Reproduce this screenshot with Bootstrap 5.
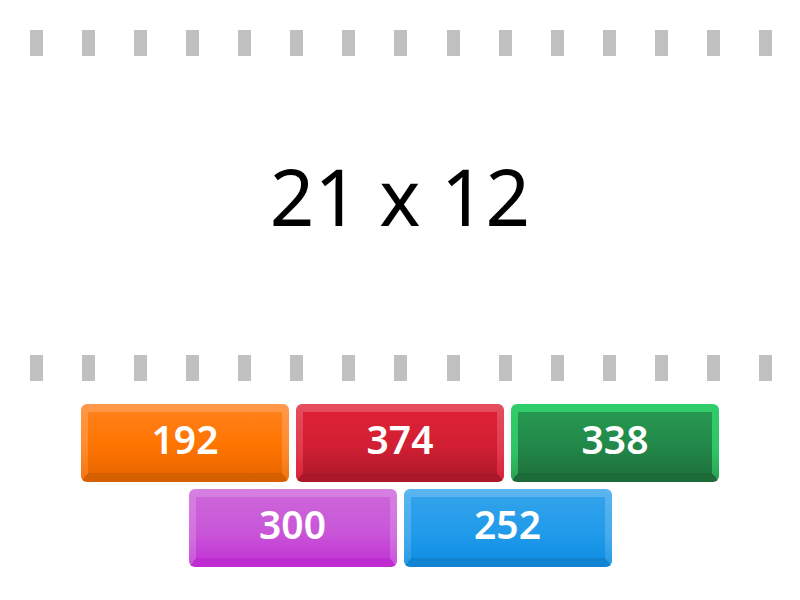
<!DOCTYPE html>
<html lang="en">
<head>
<meta charset="utf-8">
<meta name="viewport" content="width=device-width, initial-scale=1">
<title>21 x 12</title>
<link href="https://cdn.jsdelivr.net/npm/bootstrap@5.3.0/dist/css/bootstrap.min.css" rel="stylesheet">
<style>
body { font-family: "Noto Sans", "Open Sans", sans-serif; background: #fff; color: #000; }
.reel { padding: 30px 28px 0 30px; }
.sprocket { width: 13px; height: 26px; background: #c0c0c0; }
.frame { height: 299px; padding-bottom: 20px; }
.question { font-size: 78px; line-height: 100px; font-weight: 400; }
.answers { gap: 7px; padding: 23px 72px 32px; }
.answer {
  width: 208px; height: 78px; padding: 9px 8px 17px;
  border: 0; border-radius: 6px;
  background:
    linear-gradient(var(--face-top), var(--face-mid) 55%, var(--face-end)) 7px 8px / calc(100% - 14px) calc(100% - 17px) no-repeat,
    linear-gradient(var(--base), var(--base)) 7px 100% / calc(100% - 14px) 9px no-repeat,
    linear-gradient(to bottom right, transparent 50%, var(--base) 50%) 0 100% / 7px 9px no-repeat,
    linear-gradient(to bottom left, transparent 50%, var(--base) 50%) 100% 100% / 7px 9px no-repeat,
    linear-gradient(var(--rim-top), var(--rim-mid) 60%, var(--rim-end));
  color: #fff; font-size: 39px; line-height: 50px; font-weight: 600;
}
.orange { --face-top: #ff8019; --face-mid: #ff7400; --face-end: #ea6800; --rim-top: #ff994a; --rim-mid: #ff8a2b; --rim-end: #f07310; --base: #d66000; }
.red { --face-top: #dd2135; --face-mid: #d21f33; --face-end: #b31a2b; --rim-top: #e44e5e; --rim-mid: #e23a4d; --rim-end: #d91f35; --base: #a91929; }
.green { --face-top: #26984f; --face-mid: #22884a; --face-end: #1f743d; --rim-top: #2fcd69; --rim-mid: #2fc566; --rim-end: #279f51; --base: #1d6b38; }
.purple { --face-top: #cc64da; --face-mid: #c957d8; --face-end: #c23bd5; --rim-top: #d680e2; --rim-mid: #d371df; --rim-end: #ca51da; --base: #bf2dd2; }
.blue { --face-top: #32a2eb; --face-mid: #229bea; --face-end: #1290e5; --rim-top: #5bb5f0; --rim-mid: #46abed; --rim-end: #2898e5; --base: #1083d1; }
</style>
</head>
<body>
<main>
  <div class="reel d-flex justify-content-between" aria-hidden="true">
    <span class="sprocket"></span><span class="sprocket"></span><span class="sprocket"></span><span class="sprocket"></span><span class="sprocket"></span>
    <span class="sprocket"></span><span class="sprocket"></span><span class="sprocket"></span><span class="sprocket"></span><span class="sprocket"></span>
    <span class="sprocket"></span><span class="sprocket"></span><span class="sprocket"></span><span class="sprocket"></span><span class="sprocket"></span>
  </div>
  <div class="frame d-flex align-items-center justify-content-center">
    <h1 class="question m-0">21 x 12</h1>
  </div>
  <div class="reel pt-0 d-flex justify-content-between" aria-hidden="true">
    <span class="sprocket"></span><span class="sprocket"></span><span class="sprocket"></span><span class="sprocket"></span><span class="sprocket"></span>
    <span class="sprocket"></span><span class="sprocket"></span><span class="sprocket"></span><span class="sprocket"></span><span class="sprocket"></span>
    <span class="sprocket"></span><span class="sprocket"></span><span class="sprocket"></span><span class="sprocket"></span><span class="sprocket"></span>
  </div>
  <div class="answers d-flex flex-wrap justify-content-center">
    <button type="button" class="answer orange">192</button>
    <button type="button" class="answer red">374</button>
    <button type="button" class="answer green">338</button>
    <button type="button" class="answer purple">300</button>
    <button type="button" class="answer blue">252</button>
  </div>
</main>
<script src="https://cdn.jsdelivr.net/npm/bootstrap@5.3.0/dist/js/bootstrap.bundle.min.js"></script>
</body>
</html>
